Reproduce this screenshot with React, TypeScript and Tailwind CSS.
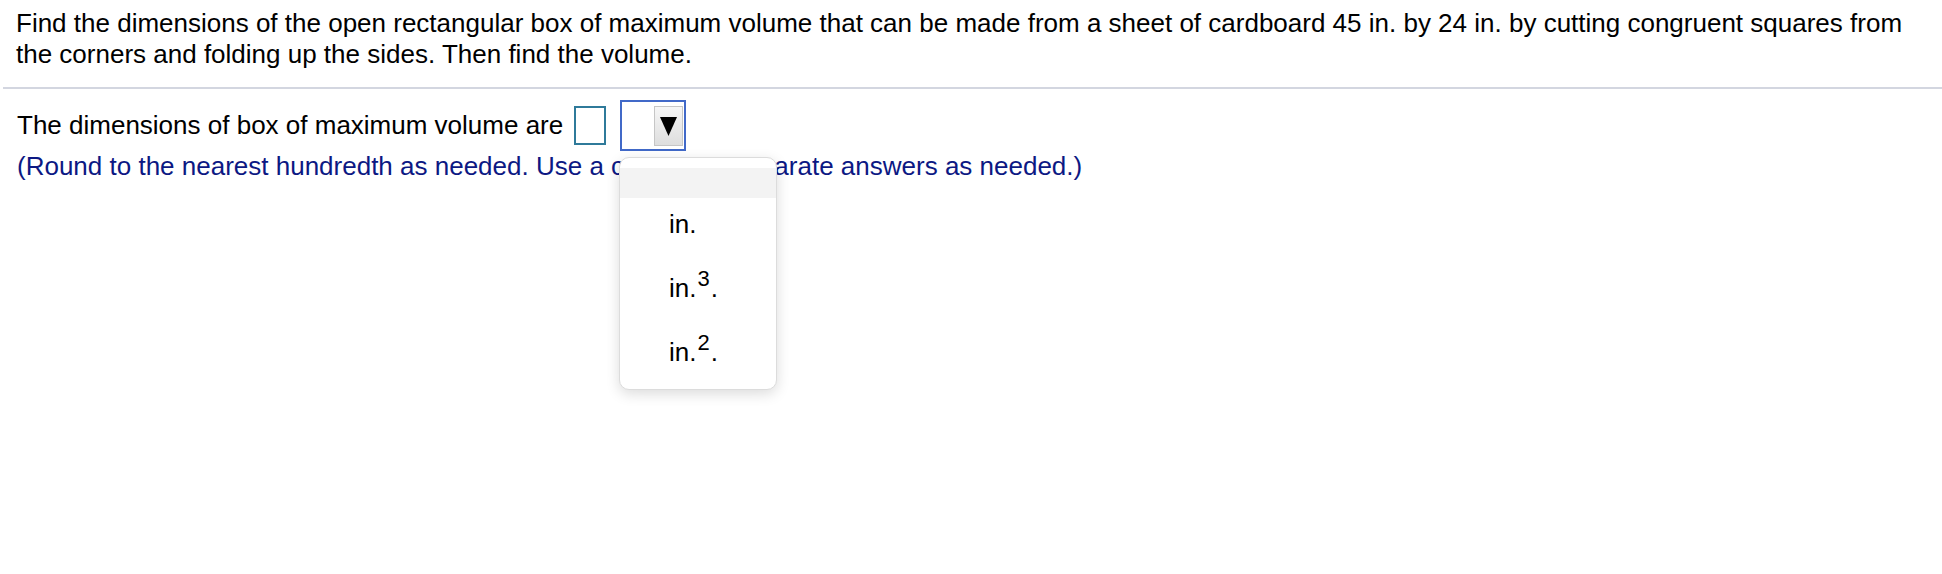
const units = [
  { label: "in.", sup: "" },
  { label: "in.", sup: "3" },
  { label: "in.", sup: "2" },
];

export default function App() {
  return (
    <div
      className="relative w-[1942px] h-[574px] bg-white text-black"
      style={{ fontFamily: '"Liberation Sans", Arial, sans-serif' }}
    >
      {/* Question */}
      <p className="px-[16px] pt-[8px] text-[26px] leading-[31px]">
        Find the dimensions of the open rectangular box of maximum volume that can be made from a sheet of
        cardboard 45 in. by 24 in. by cutting congruent squares from the corners and folding up the sides. Then
        find the volume.
      </p>

      <div className="ml-[3px] mt-[17px] h-[2px] bg-[#d3d6e0]" />

      {/* Answer row */}
      <div className="mt-[11px] px-[17px] text-[26px] leading-[31px]">
        <div className="flex items-center">
          <span>The dimensions of box of maximum volume are</span>
          <span className="ml-[11px] w-[32px] h-[39px] border-2 border-[#2f7a9a] bg-white" />
          <span className="ml-[14px] w-[66px] h-[51px] border-2 border-[#4169c8] bg-white flex items-center justify-end pr-[1px]">
            <span className="w-[29px] h-[40px] border border-[#c6c6c6] bg-gradient-to-b from-[#f6f6f6] to-[#dedede] flex items-center justify-center">
              <svg width="17" height="20" viewBox="0 0 17 20">
                <polygon points="0,1 17,1 8.5,20" fill="#000" />
              </svg>
            </span>
          </span>
        </div>
        <p className="text-[#0c1883]">
          (Round to the nearest hundredth as needed. Use a comma to separate answers as needed.)
        </p>
      </div>

      {/* Open dropdown list */}
      <div className="absolute left-[619px] top-[157px] w-[158px] h-[233px] bg-white border border-[#dcdcdc] rounded-[10px] shadow-[0_4px_14px_rgba(0,0,0,0.14)] pt-[10px] text-[26px]">
        <div className="h-[30px] bg-[#f3f3f3]" />
        {units.map((u, i) => (
          <div key={i} className="h-[64px] pt-[13px] pl-[49px] leading-none">
            {u.label}
            {u.sup && (
              <>
                <span className="relative -top-[11px] text-[22px] mx-[1px]">{u.sup}</span>.
              </>
            )}
          </div>
        ))}
      </div>
    </div>
  );
}
